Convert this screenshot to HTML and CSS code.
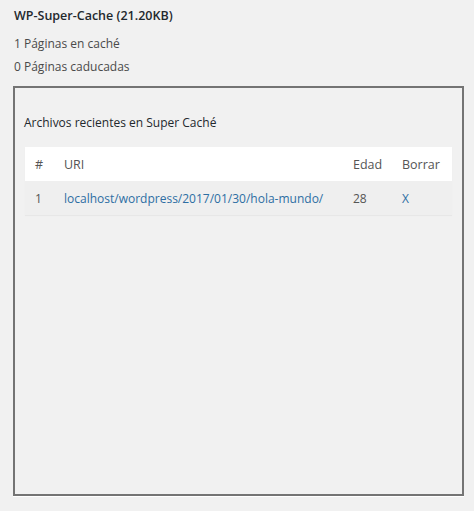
FILE: index.html
```html
<!DOCTYPE html>
<html lang="es">
<head>
<meta charset="utf-8">
<link rel="stylesheet" href="styles.css">
</head>
<body>
<div class="page">
  <h2 class="title">WP-Super-Cache (21.20KB)</h2>
  <p class="stat">1 Páginas en caché</p>
  <p class="stat">0 Páginas caducadas</p>
  <div class="box">
    <h3 class="subtitle">Archivos recientes en Super Caché</h3>
    <table class="files">
      <colgroup>
        <col class="c-num"><col class="c-uri"><col class="c-age"><col class="c-del">
      </colgroup>
      <thead>
        <tr><th>#</th><th>URI</th><th>Edad</th><th>Borrar</th></tr>
      </thead>
      <tbody>
        <tr><td>1</td><td><a href="#">localhost/wordpress/2017/01/30/hola-mundo/</a></td><td>28</td><td><a href="#">X</a></td></tr>
      </tbody>
    </table>
  </div>
</div>
</body>
</html>
```
FILE: styles.css
```css
html, body {
  margin: 0;
  padding: 0;
  background: #f1f1f1;
}
body {
  font-family: "Open Sans", "Noto Sans", sans-serif;
  font-size: 12px;
  color: #444;
}
.page {
  padding: 6px 10px 14px 13px;
}
.title {
  margin: 0 0 0 1px;
  font-size: 12.5px;
  font-weight: 600;
  color: #23282d;
  line-height: 20px;
}
.stat {
  margin: 9px 0 0 1px;
  line-height: 17px;
  color: #4a4a4a;
}
.stat + .stat {
  margin-top: 6px;
}
.box {
  margin-top: 11px;
  border: 2px solid #747474;
  box-shadow: 0 1px 0 #fff;
  height: 406px;
  padding: 0 10px;
}
.subtitle {
  margin: 26px 0 15px -1px;
  font-size: 12px;
  font-weight: 400;
  color: #23282d;
  line-height: 18px;
}
.files {
  width: 427px;
  border-collapse: collapse;
  table-layout: fixed;
  box-shadow: 0 1px 1px rgba(0,0,0,0.04);
}
.c-num { width: 29px; }
.c-uri { width: 289px; }
.c-age { width: 49px; }
.c-del { width: 60px; }
.files th, .files td {
  text-align: left;
  padding: 0 0 0 10px;
  height: 34px;
  white-space: nowrap;
  font-size: 12px;
}
.files th {
  background: #fff;
  font-weight: 400;
  color: #555;
  font-size: 12.5px;
}
.files td {
  background: #efefef;
  color: #555;
}
.files a {
  color: #2d6ea3;
  text-decoration: none;
}
```
